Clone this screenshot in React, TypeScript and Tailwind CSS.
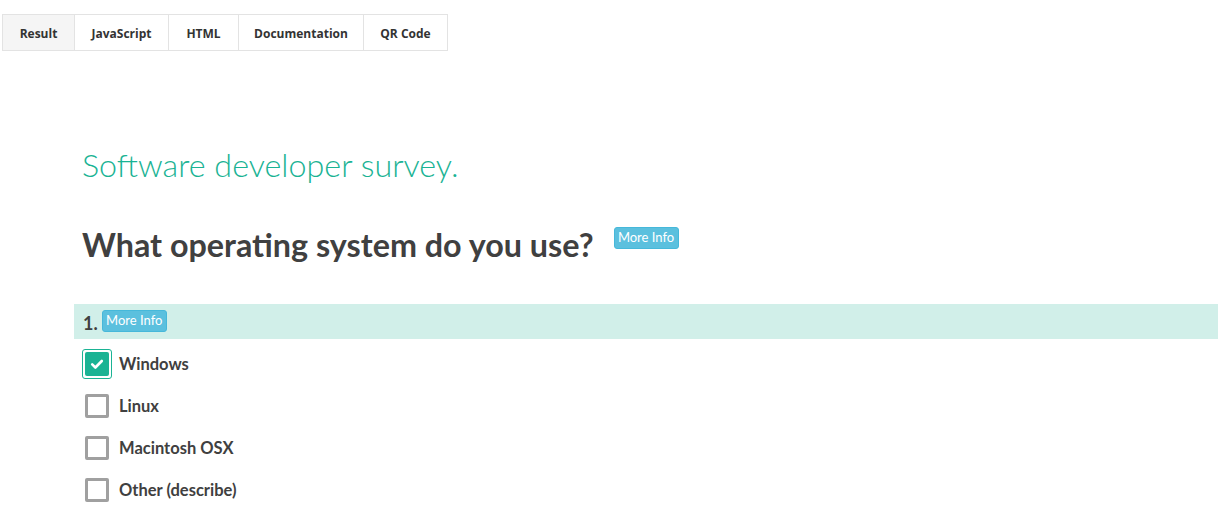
const tabs = ["Result", "JavaScript", "HTML", "Documentation", "QR Code"];
const tabWidths = ["w-[71px]", "w-[94px]", "w-[70px]", "w-[125px]", "w-[84px]"];

const options = ["Windows", "Linux", "Macintosh OSX", "Other (describe)"];

function MoreInfo() {
  return (
    <span className="inline-flex h-[22px] w-[65px] items-center justify-center rounded-[3px] border border-[#46b8da] bg-[#5bc0de] text-[13px] leading-none text-white">
      More Info
    </span>
  );
}

function Checkbox({ checked }: { checked: boolean }) {
  if (checked) {
    return (
      <span className="flex h-[30px] w-[30px] items-center justify-center rounded-[3px] border border-[#1ab394]">
        <span className="flex h-[24px] w-[24px] items-center justify-center rounded-[2px] bg-[#1ab394]">
          <svg className="h-[16px] w-[16px]" viewBox="0 0 16 16" fill="none" stroke="white" strokeWidth="2.6" strokeLinecap="round" strokeLinejoin="round">
            <path d="M3.2 8.4l3.2 3.1L12.8 5" />
          </svg>
        </span>
      </span>
    );
  }
  return (
    <span className="flex h-[30px] w-[30px] items-center justify-center">
      <span className="h-[24px] w-[24px] rounded-[2px] border-[3px] border-[#a0a0a0] bg-white" />
    </span>
  );
}

export default function App() {
  return (
    <div className="min-h-[518px] bg-white font-['Lato',sans-serif] text-[#404040]">
      <div className="pl-[2px] pt-[14px]">
        <div className="flex h-[37px] w-fit border border-[#e3e3e3] font-['Open_Sans',sans-serif] text-[12px] font-bold text-[#333]">
          {tabs.map((t, i) => (
            <div
              key={t}
              className={`flex items-center justify-center pt-[2px] ${tabWidths[i]} ${i > 0 ? "border-l border-[#e3e3e3]" : "bg-[#f5f5f5]"}`}
            >
              {t}
            </div>
          ))}
        </div>
      </div>

      <div className="pl-[74px]">
        <h3 className="mt-[94px] pl-[8px] text-[32.3px] font-light leading-[40px] text-[#1ab394]">
          Software developer survey.
        </h3>
        <div className="mt-[40px] flex items-start pl-[8px]">
          <h2 className="text-[32.3px] font-bold leading-[40px] text-[#404040]">What operating system do you use?</h2>
          <div className="ml-[20px] -mt-[1px]">
            <MoreInfo />
          </div>
        </div>

        <div className="mt-[39px] flex h-[35px] items-center bg-[#d1efe9] pl-[9px]">
          <span className="mt-[4px] text-[18px] font-bold text-[#404040]">1.</span>
          <span className="ml-[4px] -mt-[4px]">
            <MoreInfo />
          </span>
        </div>

        <div className="mt-[10px] flex flex-col gap-[12px] pl-[8px]">
          {options.map((o, i) => (
            <div key={o} className="flex items-center">
              <Checkbox checked={i === 0} />
              <span className="ml-[7px] text-[16.5px] font-bold text-[#404040]">{o}</span>
            </div>
          ))}
        </div>
      </div>
    </div>
  );
}
